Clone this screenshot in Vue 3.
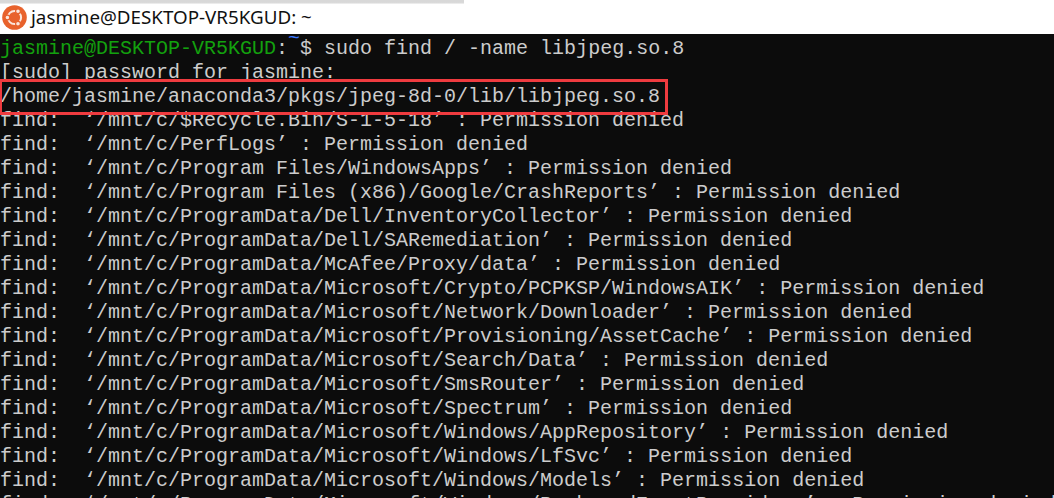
<script setup>
const rows = [
  '/mnt/c/$Recycle.Bin/S-1-5-18',
  '/mnt/c/PerfLogs',
  '/mnt/c/Program Files/WindowsApps',
  '/mnt/c/Program Files (x86)/Google/CrashReports',
  '/mnt/c/ProgramData/Dell/InventoryCollector',
  '/mnt/c/ProgramData/Dell/SARemediation',
  '/mnt/c/ProgramData/McAfee/Proxy/data',
  '/mnt/c/ProgramData/Microsoft/Crypto/PCPKSP/WindowsAIK',
  '/mnt/c/ProgramData/Microsoft/Network/Downloader',
  '/mnt/c/ProgramData/Microsoft/Provisioning/AssetCache',
  '/mnt/c/ProgramData/Microsoft/Search/Data',
  '/mnt/c/ProgramData/Microsoft/SmsRouter',
  '/mnt/c/ProgramData/Microsoft/Spectrum',
  '/mnt/c/ProgramData/Microsoft/Windows/AppRepository',
  '/mnt/c/ProgramData/Microsoft/Windows/LfSvc',
  '/mnt/c/ProgramData/Microsoft/Windows/Models',
  '/mnt/c/ProgramData/Microsoft/Windows/PackagedEventProviders',
]
</script>

<template>
  <div class="page">
    <header class="titlebar">
      <div class="topshadow"></div>
      <div class="titlerow">
        <svg class="logo" width="25" height="25" viewBox="0 0 25 25">
          <circle cx="12.5" cy="12.5" r="12.3" fill="#e8622c" />
          <circle cx="12.5" cy="12.5" r="6.6" fill="none" stroke="#fbe6dc" stroke-width="2" />
          <circle cx="5.4" cy="12.5" r="2.4" fill="#fbe6dc" stroke="#e8622c" stroke-width="1.2" />
          <circle cx="16" cy="6.3" r="2.4" fill="#fbe6dc" stroke="#e8622c" stroke-width="1.2" />
          <circle cx="16" cy="18.7" r="2.4" fill="#fbe6dc" stroke="#e8622c" stroke-width="1.2" />
        </svg>
        <span class="title">jasmine@DESKTOP-VR5KGUD: ~</span>
      </div>
    </header>
    <main class="term">
      <div class="line"><span class="green">jasmine@DESKTOP-VR5KGUD</span>:<span class="blue">~</span>$ sudo find / -name libjpeg.so.8</div>
      <div class="line">[sudo] password for jasmine:</div>
      <div class="line">/home/jasmine/anaconda3/pkgs/jpeg-8d-0/lib/libjpeg.so.8</div>
      <div v-for="r in rows" :key="r" class="line">find: <span class="q open">‘</span>{{ r }}<span class="q">’</span>: Permission denied</div>
      <div class="redbox"></div>
    </main>
  </div>
</template>

<style scoped>
.page {
  width: 1054px;
  height: 498px;
  overflow: hidden;
  background: #fff;
  display: flex;
  flex-direction: column;
}
.titlebar {
  height: 34px;
  flex: none;
  background: #fff;
}
.topshadow {
  width: 464px;
  height: 4px;
  background: linear-gradient(to bottom, #d8d8d8 60%, #f4f4f4);
}
.titlerow {
  display: flex;
  align-items: center;
  gap: 4px;
  height: 27px;
  padding-left: 2px;
}
.logo {
  flex: none;
}
.title {
  font-family: "Noto Sans", sans-serif;
  font-size: 18.8px;
  line-height: 27px;
  color: #111;
  white-space: pre;
}
.term {
  position: relative;
  flex: 1;
  background: #0c0c0c;
  color: #cccccc;
  font-family: "Liberation Mono", monospace;
  font-size: 20px;
  line-height: 24px;
  padding-top: 3px;
}
.line {
  height: 24px;
  white-space: pre;
}
.green {
  color: #13a10e;
}
.blue {
  display: inline-block;
  color: #3b78ff;
  transform: translateY(-10px);
}
.q {
  display: inline-block;
  width: 24px;
  text-align: left;
}
.q.open {
  text-align: right;
}
.redbox {
  position: absolute;
  left: -1px;
  top: 45px;
  width: 669px;
  height: 36px;
  box-sizing: border-box;
  border: 3px solid #ef3b3f;
}
</style>
